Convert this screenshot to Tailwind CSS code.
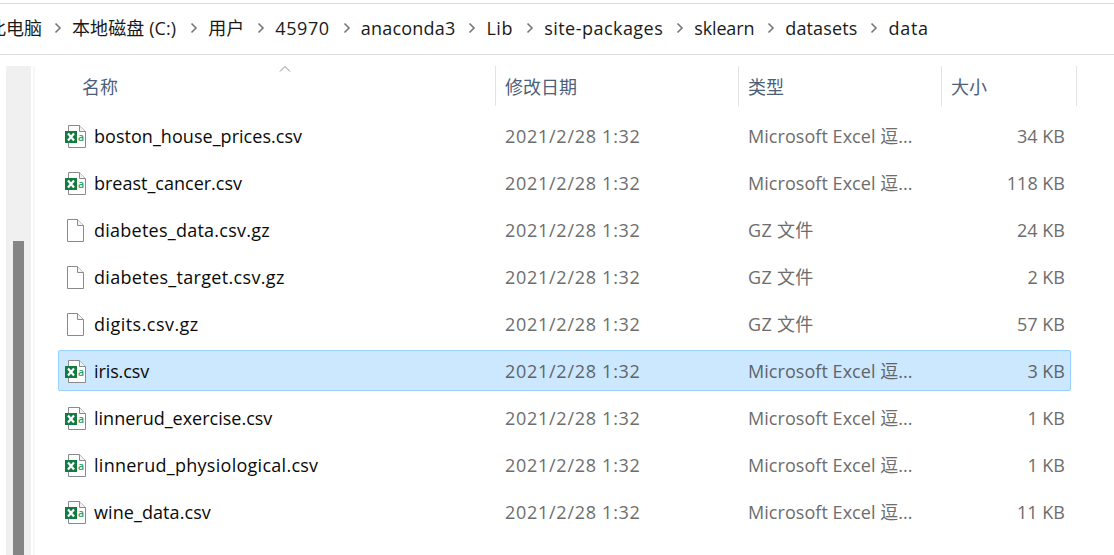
<!DOCTYPE html>
<html lang="zh"><head><meta charset="utf-8">
<script src="https://cdn.jsdelivr.net/npm/@tailwindcss/browser@4"></script>
</head>
<body class="w-[1114px] h-[555px] overflow-hidden bg-white font-['Open_Sans','Noto_Sans_CJK_SC',sans-serif] text-[18px] text-[#1a1a1a]">
<svg class="hidden"><defs>
<symbol id="xl" viewBox="0 0 21 23">
<path d="M3.5.5H14.5L20.5 6.5V22.5H3.5Z" fill="#fff" stroke="#8a8a8a"/><path d="M14.5 .5V6.5H20.5" fill="#f2f2f2" stroke="#8a8a8a"/>
<rect x="0" y="6" width="12" height="12" fill="#107c41"/>
<path d="M3 8.5l6 7M9 8.5l-6 7" stroke="#fff" stroke-width="2.2"/>
<text x="13" y="16" font-size="10.5" font-weight="600" font-family="Open Sans" fill="#21a366">a</text>
</symbol>
<symbol id="gz" viewBox="0 0 17 23">
<path d="M.5.5H10.5L16.5 6.5V22.5H.5Z" fill="#fff" stroke="#8a8a8a"/><path d="M10.5 .5V6.5H16.5" fill="#f4f4f4" stroke="#8a8a8a"/>
</symbol>
<symbol id="ch" viewBox="0 0 8 12"><path d="M1.5 1.5L6 6L1.5 10.5" fill="none" stroke="#777" stroke-width="1.6"/></symbol>
</defs></svg>

<div class="h-[55px] pt-[3px] border-b border-[#dcdcdc]">
  <div class="h-[51px] border-t border-[#dcdcdc] overflow-hidden flex items-center text-[18px] leading-[24px] whitespace-nowrap pb-[2px]">
    <span class="w-[54px] shrink-0 -ml-[12px]">此电脑</span>
    <svg class="w-[8px] h-[12px] ml-[12px] mr-[10px]"><use href="#ch"/></svg>
    <span class="tracking-[0.1px]">本地磁盘 (C:)</span>
    <svg class="w-[8px] h-[12px] ml-[14px] mr-[10px]"><use href="#ch"/></svg>
    <span>用户</span>
    <svg class="w-[8px] h-[12px] ml-[13px] mr-[10px]"><use href="#ch"/></svg>
    <span class="tracking-[0.6px]">45970</span>
    <svg class="w-[8px] h-[12px] ml-[13px] mr-[10px]"><use href="#ch"/></svg>
    <span class="tracking-[0.2px]">anaconda3</span>
    <svg class="w-[8px] h-[12px] ml-[13px] mr-[10px]"><use href="#ch"/></svg>
    <span class="tracking-[0.6px]">Lib</span>
    <svg class="w-[8px] h-[12px] ml-[13px] mr-[10px]"><use href="#ch"/></svg>
    <span class="tracking-[0.47px]">site-packages</span>
    <svg class="w-[8px] h-[12px] ml-[13px] mr-[10px]"><use href="#ch"/></svg>
    <span class="tracking-[-0.15px]">sklearn</span>
    <svg class="w-[8px] h-[12px] ml-[13px] mr-[10px]"><use href="#ch"/></svg>
    <span class="tracking-[0.12px]">datasets</span>
    <svg class="w-[8px] h-[12px] ml-[13px] mr-[10px]"><use href="#ch"/></svg>
    <span class="tracking-[0.75px]">data</span>
  </div>
</div>

<div class="flex h-[500px]">
  <div class="w-[6px]"></div>
  <div class="w-[25px] mt-[11px] bg-[#f0f0f0] pl-[7px] pt-[175px]"><div class="w-[11px] h-[314px] bg-[#858585]"></div></div>
  <div class="w-[2px]"></div>
  <div class="w-[2px] mt-[11px] bg-[#f7f7f7]"></div>

  <div class="flex-1 min-w-0">
    <div class="relative flex h-[40px] mt-[11px] text-[#4c607a] leading-[42px]">
      <svg class="absolute left-[244px] -top-[1px] w-[12px] h-[8px]" viewBox="0 0 12 8"><path d="M1 6.5L6 1.5L11 6.5" fill="none" stroke="#8a8a8a"/></svg>
      <div class="w-[461px] pl-[47px] border-r border-[#e3e3e3]">名称</div>
      <div class="w-[243px] pl-[9px] border-r border-[#e3e3e3]">修改日期</div>
      <div class="w-[203px] pl-[9px] border-r border-[#e3e3e3]">类型</div>
      <div class="w-[135px] pl-[9px] border-r border-[#e3e3e3]">大小</div>
    </div>
    <div class="ml-[23px] w-[1013px] pt-[9px] flex flex-col gap-[6px]">

      <div class="flex items-center h-[41px] pt-[2px] border border-transparent">
        <svg class="w-[21px] h-[23px] ml-[6px] mr-[8px]"><use href="#xl"/></svg>
        <div class="w-[411px] text-[#0a0a0a] tracking-[0.04px]">boston_house_prices.csv</div>
        <div class="w-[243px] text-[#6d6d6d] tracking-[0.72px]">2021/2/28 1:32</div>
        <div class="w-[173px] text-[#6d6d6d] whitespace-nowrap tracking-[0.05px]">Microsoft Excel 逗...</div>
        <div class="w-[144px] text-right text-[#6d6d6d]">34 KB</div>
      </div>
      <div class="flex items-center h-[41px] pt-[2px] border border-transparent">
        <svg class="w-[21px] h-[23px] ml-[6px] mr-[8px]"><use href="#xl"/></svg>
        <div class="w-[411px] text-[#0a0a0a]">breast_cancer.csv</div>
        <div class="w-[243px] text-[#6d6d6d] tracking-[0.72px]">2021/2/28 1:32</div>
        <div class="w-[173px] text-[#6d6d6d] whitespace-nowrap tracking-[0.05px]">Microsoft Excel 逗...</div>
        <div class="w-[144px] text-right text-[#6d6d6d]">118 KB</div>
      </div>
      <div class="flex items-center h-[41px] pt-[2px] border border-transparent">
        <svg class="w-[17px] h-[23px] ml-[8px] mr-[10px]"><use href="#gz"/></svg>
        <div class="w-[411px] text-[#0a0a0a] tracking-[0.25px]">diabetes_data.csv.gz</div>
        <div class="w-[243px] text-[#6d6d6d] tracking-[0.72px]">2021/2/28 1:32</div>
        <div class="w-[173px] text-[#6d6d6d] whitespace-nowrap tracking-[0.3px]">GZ 文件</div>
        <div class="w-[144px] text-right text-[#6d6d6d]">24 KB</div>
      </div>
      <div class="flex items-center h-[41px] pt-[2px] border border-transparent">
        <svg class="w-[17px] h-[23px] ml-[8px] mr-[10px]"><use href="#gz"/></svg>
        <div class="w-[411px] text-[#0a0a0a] tracking-[0.32px]">diabetes_target.csv.gz</div>
        <div class="w-[243px] text-[#6d6d6d] tracking-[0.72px]">2021/2/28 1:32</div>
        <div class="w-[173px] text-[#6d6d6d] whitespace-nowrap tracking-[0.3px]">GZ 文件</div>
        <div class="w-[144px] text-right text-[#6d6d6d]">2 KB</div>
      </div>
      <div class="flex items-center h-[41px] pt-[2px] border border-transparent">
        <svg class="w-[17px] h-[23px] ml-[8px] mr-[10px]"><use href="#gz"/></svg>
        <div class="w-[411px] text-[#0a0a0a] tracking-[0.46px]">digits.csv.gz</div>
        <div class="w-[243px] text-[#6d6d6d] tracking-[0.72px]">2021/2/28 1:32</div>
        <div class="w-[173px] text-[#6d6d6d] whitespace-nowrap tracking-[0.3px]">GZ 文件</div>
        <div class="w-[144px] text-right text-[#6d6d6d]">57 KB</div>
      </div>
      <div class="flex items-center h-[41px] pt-[2px] border border-[#99d1ff] bg-[#cce8ff] rounded-[2px]">
        <svg class="w-[21px] h-[23px] ml-[6px] mr-[8px]"><use href="#xl"/></svg>
        <div class="w-[411px] text-[#0a0a0a] tracking-[-0.1px]">iris.csv</div>
        <div class="w-[243px] text-[#5f6468] tracking-[0.72px]">2021/2/28 1:32</div>
        <div class="w-[173px] text-[#5f6468] whitespace-nowrap tracking-[0.05px]">Microsoft Excel 逗...</div>
        <div class="w-[144px] text-right text-[#5f6468]">3 KB</div>
      </div>
      <div class="flex items-center h-[41px] pt-[2px] border border-transparent">
        <svg class="w-[21px] h-[23px] ml-[6px] mr-[8px]"><use href="#xl"/></svg>
        <div class="w-[411px] text-[#0a0a0a]">linnerud_exercise.csv</div>
        <div class="w-[243px] text-[#6d6d6d] tracking-[0.72px]">2021/2/28 1:32</div>
        <div class="w-[173px] text-[#6d6d6d] whitespace-nowrap tracking-[0.05px]">Microsoft Excel 逗...</div>
        <div class="w-[144px] text-right text-[#6d6d6d]">1 KB</div>
      </div>
      <div class="flex items-center h-[41px] pt-[2px] border border-transparent">
        <svg class="w-[21px] h-[23px] ml-[6px] mr-[8px]"><use href="#xl"/></svg>
        <div class="w-[411px] text-[#0a0a0a] tracking-[0.27px]">linnerud_physiological.csv</div>
        <div class="w-[243px] text-[#6d6d6d] tracking-[0.72px]">2021/2/28 1:32</div>
        <div class="w-[173px] text-[#6d6d6d] whitespace-nowrap tracking-[0.05px]">Microsoft Excel 逗...</div>
        <div class="w-[144px] text-right text-[#6d6d6d]">1 KB</div>
      </div>
      <div class="flex items-center h-[41px] pt-[2px] border border-transparent">
        <svg class="w-[21px] h-[23px] ml-[6px] mr-[8px]"><use href="#xl"/></svg>
        <div class="w-[411px] text-[#0a0a0a] tracking-[0.08px]">wine_data.csv</div>
        <div class="w-[243px] text-[#6d6d6d] tracking-[0.72px]">2021/2/28 1:32</div>
        <div class="w-[173px] text-[#6d6d6d] whitespace-nowrap tracking-[0.05px]">Microsoft Excel 逗...</div>
        <div class="w-[144px] text-right text-[#6d6d6d]">11 KB</div>
      </div>
    </div>
  </div>
</div>
</body></html>
